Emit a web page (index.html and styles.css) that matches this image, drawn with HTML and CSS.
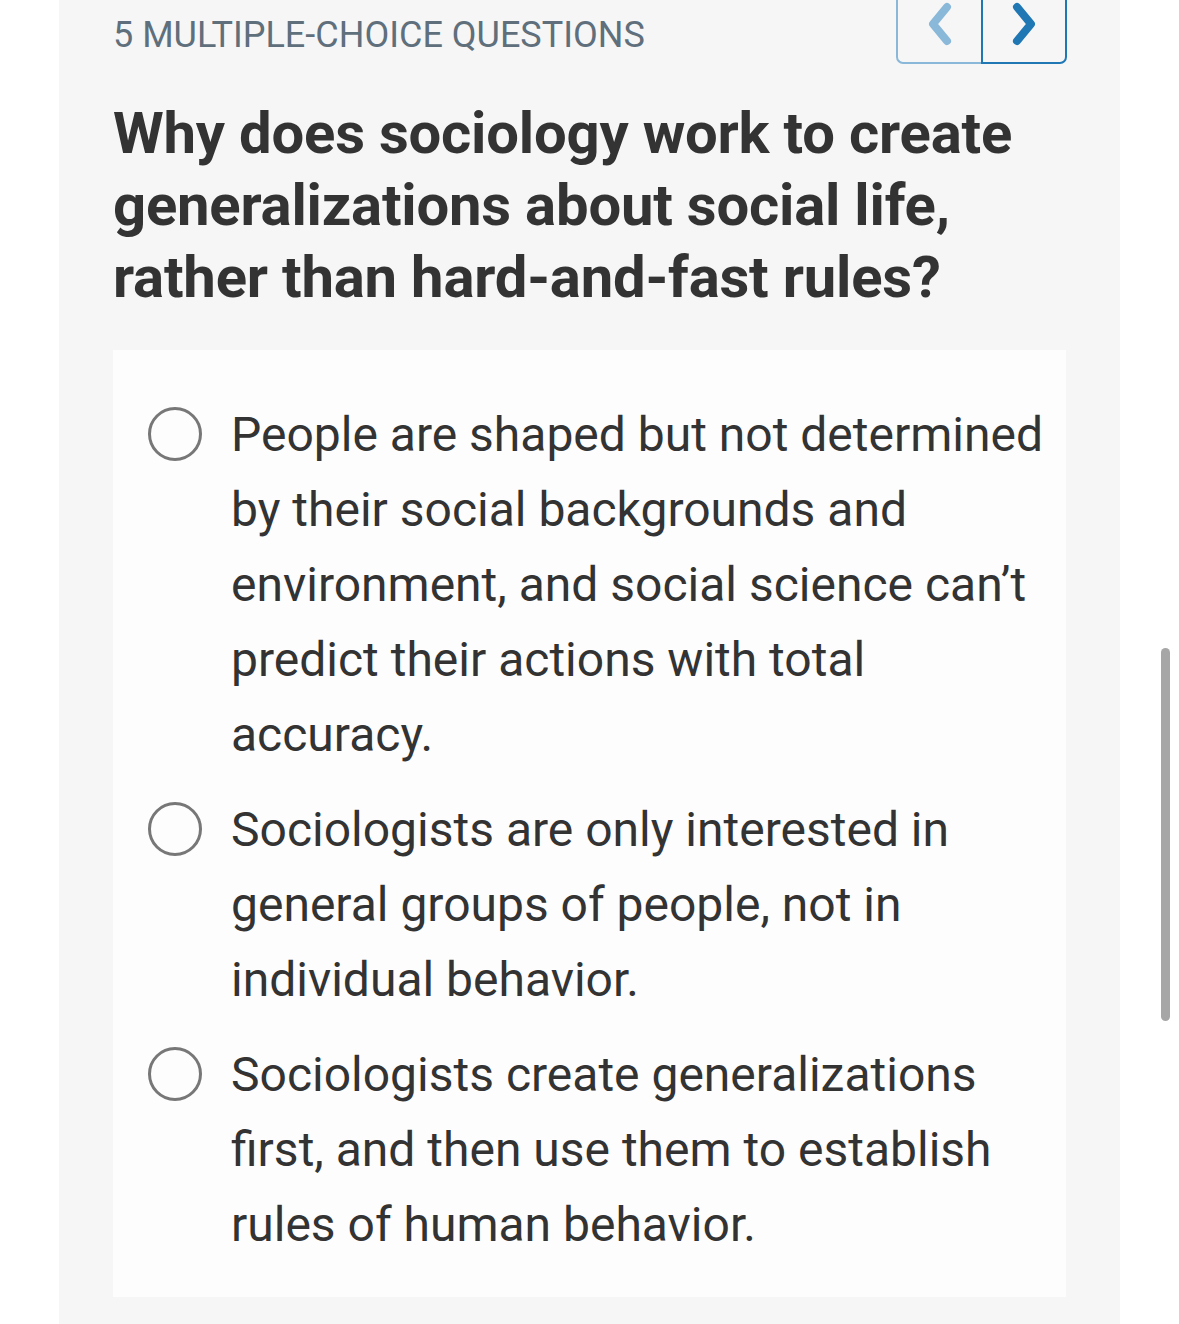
FILE: index.html
```html
<!DOCTYPE html>
<html>
<head>
<meta charset="utf-8">
<link rel="stylesheet" href="styles.css">
</head>
<body>
<div class="panel">
  <div class="head">
    <div class="label">5 MULTIPLE-CHOICE QUESTIONS</div>
    <div class="nav">
      <button class="btn prev" aria-label="Previous">
        <svg width="30" height="44" viewBox="0 0 30 44"><path d="M22 5 L8 22 L22 39" fill="none" stroke="#8ab8d8" stroke-width="8" stroke-linecap="round" stroke-linejoin="round"/></svg>
      </button>
      <button class="btn next" aria-label="Next">
        <svg width="30" height="44" viewBox="0 0 30 44"><path d="M8 5 L22 22 L8 39" fill="none" stroke="#1f77b4" stroke-width="8" stroke-linecap="round" stroke-linejoin="round"/></svg>
      </button>
    </div>
  </div>
  <h1 class="question">Why does sociology work to create generalizations about social life, rather than hard-and-fast rules?</h1>
  <div class="card">
    <div class="option"><span class="radio"></span><span class="text">People are shaped but not determined by their social backgrounds and environment, and social science can’t predict their actions with total accuracy.</span></div>
    <div class="option"><span class="radio"></span><span class="text">Sociologists are only interested in general groups of people, not in individual behavior.</span></div>
    <div class="option"><span class="radio"></span><span class="text">Sociologists create generalizations first, and then use them to establish rules of human behavior.</span></div>
  </div>
</div>
<div class="scrollbar"></div>
</body>
</html>
```
FILE: styles.css
```css
html, body {
  margin: 0;
  padding: 0;
  background: #ffffff;
  font-family: Roboto, "Liberation Sans", sans-serif;
  overflow: hidden;
}
.panel {
  margin-left: 59px;
  width: 1061px;
  box-sizing: border-box;
  padding: 0 54px 40px;
  background: #f6f6f6;
  min-height: 1400px;
}
.head {
  display: flex;
  justify-content: space-between;
  align-items: flex-start;
  height: 64px;
}
.label {
  font-size: 36px;
  color: #5f6f7c;
  margin-top: 14px;
  line-height: 42px;
}
.nav {
  display: flex;
  margin-top: -6px;
  margin-right: -1px;
}
.btn {
  width: 85px;
  height: 70px;
  background: transparent;
  display: flex;
  align-items: flex-start;
  justify-content: center;
  padding: 6px 0 0;
  box-sizing: border-box;
}
.prev {
  border: 2px solid #8ab8d8;
  border-right: none;
  border-radius: 0 0 0 7px;
}
.next {
  width: 86px;
  border: 2px solid #1f77b4;
  border-radius: 0 0 7px 0;
}
.question {
  margin: 33px 0 37px;
  font-size: 58px;
  font-weight: 700;
  line-height: 72px;
  letter-spacing: -0.2px;
  color: #333333;
}
.card {
  background: #fdfdfd;
  padding: 47px 20px 35px 35px;
  display: flex;
  flex-direction: column;
  gap: 20px;
}
.option {
  display: flex;
  align-items: flex-start;
  gap: 29px;
}
.radio {
  flex: none;
  width: 54px;
  height: 54px;
  box-sizing: border-box;
  border: 3px solid #777777;
  border-radius: 50%;
  margin-top: 10px;
}
.text {
  font-size: 48px;
  line-height: 75px;
  color: #333333;
}
.scrollbar {
  position: fixed;
  left: 1161px;
  top: 648px;
  width: 9px;
  height: 373px;
  border-radius: 5px;
  background: #a6a6a6;
}
```
